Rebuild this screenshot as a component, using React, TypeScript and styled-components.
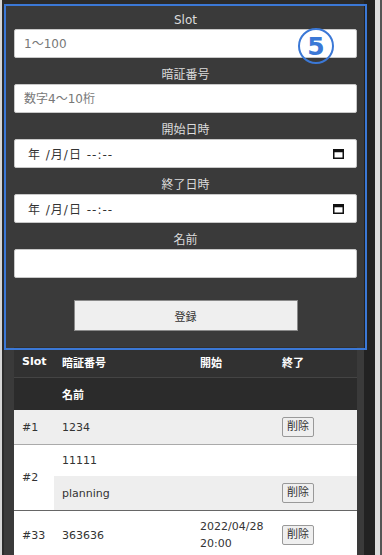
import styled, { createGlobalStyle } from 'styled-components'

const GlobalStyle = createGlobalStyle`
  html, body {
    margin: 0;
    padding: 0;
    background: #2b2b2b;
  }
  body {
    font-family: "DejaVu Sans", "Noto Sans CJK JP", sans-serif;
  }
  * { box-sizing: border-box; }
`

const S_page = styled.div`
  position: relative;
  display: flex;
  width: 382px;
  height: 555px;
  overflow: hidden;
`
const S_edge = styled.div`
  width: 2px;
  margin-right: 2px;
  background: #d6d6d6;
`
const S_main = styled.main`
  width: 360px;
  margin-top: 4px;
  padding: 0 7px 0 10px;
  background: #3a3a3a;
  overflow: hidden;
`
const S_track = styled.div`
  width: 11px;
  background: #222;
`
const S_thumb = styled.div`
  width: 7px;
  background: #dcdcdc;
  border-right: 2px solid #555;
`

/* form */
const S_form = styled.form`
  display: flex;
  flex-direction: column;
  padding: 7px 0 16px 0;
`
const S_fields = styled.div`
  display: flex;
  flex-direction: column;
  gap: 8px;
`
const S_field = styled.div`
  display: flex;
  flex-direction: column;
`
const S_label = styled.label`
  font-size: 12px;
  line-height: 18px;
  color: #dcdcdc;
  text-align: center;
`
const S_input = styled.input`
  height: 29px;
  width: 100%;
  padding: 0 9px;
  border: 1px solid #c8c8c8;
  border-radius: 2px;
  background: #fff;
  font-family: inherit;
  font-size: 12px;
  color: #333;
  outline: none;
  &::placeholder { color: #777; }
`
const S_dateBox = styled.div`
  display: flex;
  align-items: center;
  justify-content: space-between;
  height: 29px;
  padding: 0 12px 0 13px;
  border: 1px solid #c8c8c8;
  border-radius: 2px;
  background: #fff;
  font-size: 12px;
  color: #333;
  letter-spacing: 1px;
`
const S_submit = styled.button`
  align-self: center;
  width: 224px;
  height: 31px;
  margin-top: 22px;
  border: 1px solid #8a8a8a;
  background: #efefef;
  font-family: inherit;
  font-size: 11px;
  color: #333;
`

/* table */
const S_table = styled.table`
  width: 343px;
  border-collapse: collapse;
  table-layout: fixed;
  font-size: 11px;
`
const S_headRow = styled.tr<{ $top?: boolean }>`
  background: ${({ $top }) => ($top ? '#313131' : '#2b2b2b')};
  border-top: ${({ $top }) => ($top ? 'none' : '1px solid #444')};
`
const S_th = styled.th<{ $h: number }>`
  height: ${({ $h }) => $h}px;
  padding: 0 8px;
  text-align: left;
  font-weight: bold;
  color: #fff;
`
const S_row = styled.tr<{ $shade?: boolean; $line?: string }>`
  background: ${({ $shade }) => ($shade ? '#eeeeee' : '#ffffff')};
  border-bottom: ${({ $line }) => ($line ? `1px solid ${$line}` : 'none')};
`
const S_td = styled.td<{ $white?: boolean }>`
  padding: 7px 8px;
  line-height: 17px;
  color: #333;
  vertical-align: middle;
  background: ${({ $white }) => ($white ? '#fff' : 'transparent')};
`
const S_del = styled.button`
  display: block;
  height: 20px;
  padding: 0 4px;
  border: 1px solid #999;
  border-radius: 2px;
  background: #efefef;
  font-family: inherit;
  font-size: 11px;
  line-height: 16px;
  color: #333;
`

/* annotation overlay */
const S_mark = styled.div`
  position: absolute;
  left: 4px;
  top: 4px;
  width: 363px;
  height: 346px;
  border: 2px solid #3b78d6;
  pointer-events: none;
`
const S_badge = styled.div`
  position: absolute;
  left: 292px;
  top: 22px;
  width: 36px;
  height: 36px;
  border: 2px solid #3b78d6;
  border-radius: 50%;
  display: flex;
  align-items: center;
  justify-content: center;
  font-family: "DejaVu Sans", sans-serif;
  font-size: 25px;
  font-weight: bold;
  color: #3b78d6;
`

const Calendar = () => (
  <svg width="11" height="11" viewBox="0 0 11 11">
    <rect x="0.75" y="1.75" width="9.5" height="8.5" fill="none" stroke="#111" strokeWidth="1.5" />
    <rect x="0.75" y="1.75" width="9.5" height="2.5" fill="#111" />
  </svg>
)

const rows = [
  { slot: '#1', code: '1234', start: '', shade: true, line: '#aaa' },
]

const App = () => {
  return (
    <>
      <GlobalStyle />
      <S_page>
        <S_edge />
        <S_main>
          <S_form onSubmit={(e) => e.preventDefault()}>
            <S_fields>
              <S_field>
                <S_label>Slot</S_label>
                <S_input placeholder="1〜100" />
              </S_field>
              <S_field>
                <S_label>暗証番号</S_label>
                <S_input placeholder="数字4〜10桁" />
              </S_field>
              <S_field>
                <S_label>開始日時</S_label>
                <S_dateBox>
                  <span>年 /月/日 --:--</span>
                  <Calendar />
                </S_dateBox>
              </S_field>
              <S_field>
                <S_label>終了日時</S_label>
                <S_dateBox>
                  <span>年 /月/日 --:--</span>
                  <Calendar />
                </S_dateBox>
              </S_field>
              <S_field>
                <S_label>名前</S_label>
                <S_input />
              </S_field>
            </S_fields>
            <S_submit type="submit">登録</S_submit>
          </S_form>

          <S_table>
            <colgroup>
              <col style={{ width: 40 }} />
              <col style={{ width: 138 }} />
              <col style={{ width: 82 }} />
              <col style={{ width: 83 }} />
            </colgroup>
            <thead>
              <S_headRow $top>
                <S_th $h={30}>Slot</S_th>
                <S_th $h={30}>暗証番号</S_th>
                <S_th $h={30}>開始</S_th>
                <S_th $h={30}>終了</S_th>
              </S_headRow>
              <S_headRow>
                <S_th $h={33}></S_th>
                <S_th $h={33}>名前</S_th>
                <S_th $h={33}></S_th>
                <S_th $h={33}></S_th>
              </S_headRow>
            </thead>
            <tbody>
              {rows.map((r) => (
                <S_row key={r.slot} $shade={r.shade} $line={r.line}>
                  <S_td>{r.slot}</S_td>
                  <S_td>{r.code}</S_td>
                  <S_td>{r.start}</S_td>
                  <S_td><S_del>削除</S_del></S_td>
                </S_row>
              ))}
              <S_row>
                <S_td rowSpan={2} $white>#2</S_td>
                <S_td>11111</S_td>
                <S_td></S_td>
                <S_td></S_td>
              </S_row>
              <S_row $shade $line="#666">
                <S_td>planning</S_td>
                <S_td></S_td>
                <S_td><S_del>削除</S_del></S_td>
              </S_row>
              <S_row>
                <S_td>#33</S_td>
                <S_td>363636</S_td>
                <S_td>2022/04/28<br />20:00</S_td>
                <S_td><S_del>削除</S_del></S_td>
              </S_row>
            </tbody>
          </S_table>
        </S_main>
        <S_track />
        <S_thumb />
        <S_mark>
          <S_badge>5</S_badge>
        </S_mark>
      </S_page>
    </>
  )
}

export default App
